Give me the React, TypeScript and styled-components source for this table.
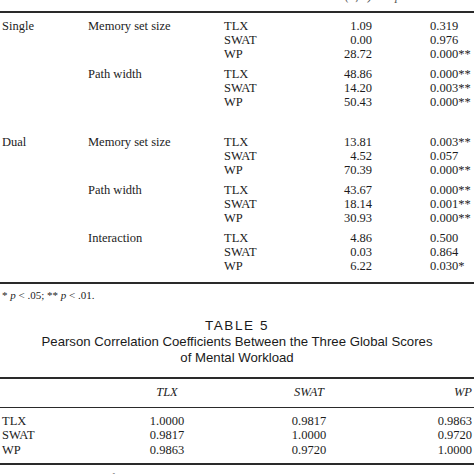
import React from 'react'
import styled, { createGlobalStyle } from 'styled-components'

const GlobalStyle = createGlobalStyle`
  html, body {
    margin: 0;
    padding: 0;
    background: #fff;
  }
  body {
    font-family: 'Liberation Serif', 'Times New Roman', serif;
    color: #1c1c1c;
  }
`

const Page = styled.div`
  width: 474px;
  height: 474px;
  overflow: hidden;
  display: flex;
  flex-direction: column;
`

const Rule = styled.div<{ $thin?: boolean }>`
  height: ${(p) => (p.$thin ? 1 : 2)}px;
  background: #2a2a2a;
  width: 100%;
  flex-shrink: 0;
`

/* ---------- table 4 (anova) ---------- */

const AnovaHead = styled.div`
  display: grid;
  grid-template-columns: 86px 136px 80px 68px 60px;
  padding-left: 2px;
  height: 14px;
  line-height: 14px;
  font-size: 12.5px;
  margin-top: -11px;
  margin-bottom: 8px;
  white-space: nowrap;
  color: #555;
`

const HeadCell = styled.span<{ $right?: boolean; $pad?: number; $italic?: boolean }>`
  text-align: ${(p) => (p.$right ? 'right' : 'left')};
  padding-left: ${(p) => p.$pad ?? 0}px;
  font-style: ${(p) => (p.$italic ? 'italic' : 'normal')};
`

const AnovaBody = styled.div`
  display: flex;
  flex-direction: column;
  gap: 26px;
  padding: 6px 0 9px;
`

const TaskGroup = styled.div`
  display: flex;
  flex-direction: column;
  gap: 6px;
`

const Block = styled.div`
  display: flex;
  flex-direction: column;
`

const AnovaRow = styled.div`
  display: grid;
  grid-template-columns: 86px 136px 80px 68px 110px;
  padding-left: 2px;
  height: 14px;
  line-height: 14px;
  font-size: 12.5px;
  white-space: nowrap;
`

const Cell = styled.span<{ $right?: boolean; $pad?: number }>`
  text-align: ${(p) => (p.$right ? 'right' : 'left')};
  padding-left: ${(p) => p.$pad ?? 0}px;
`

const Footnote = styled.div<{ $top?: number }>`
  font-size: 11px;
  line-height: 14px;
  padding-left: 2px;
  margin-top: ${(p) => p.$top ?? 4}px;
  white-space: nowrap;
  i {
    font-style: italic;
  }
`

/* ---------- table 5 ---------- */

const Caption = styled.div`
  margin-top: 16px;
  margin-bottom: 11px;
  font-family: 'Liberation Sans', Arial, sans-serif;
  font-size: 13.2px;
  line-height: 16px;
  text-align: center;
  color: #1a1a1a;
`

const CaptionNumber = styled.div`
  font-size: 13.5px;
  letter-spacing: 1.6px;
`

const CorrGrid = styled.div<{ $head?: boolean }>`
  display: grid;
  grid-template-columns: 110px 110px 174px 76px;
  padding: ${(p) => (p.$head ? '6px 2px 7px 2px' : '6px 2px 5.5px 2px')};
  font-size: 12.5px;
  line-height: 14.5px;
  white-space: nowrap;
`

const CorrCell = styled.span<{ $align: 'left' | 'center' | 'right'; $italic?: boolean }>`
  text-align: ${(p) => p.$align};
  font-style: ${(p) => (p.$italic ? 'italic' : 'normal')};
`

type Factor = { name: string; rows: [string, string, string][] }
type Task = { task: string; factors: Factor[] }

const anova: Task[] = [
  {
    task: 'Single',
    factors: [
      {
        name: 'Memory set size',
        rows: [
          ['TLX', '1.09', '0.319'],
          ['SWAT', '0.00', '0.976'],
          ['WP', '28.72', '0.000**'],
        ],
      },
      {
        name: 'Path width',
        rows: [
          ['TLX', '48.86', '0.000**'],
          ['SWAT', '14.20', '0.003**'],
          ['WP', '50.43', '0.000**'],
        ],
      },
    ],
  },
  {
    task: 'Dual',
    factors: [
      {
        name: 'Memory set size',
        rows: [
          ['TLX', '13.81', '0.003**'],
          ['SWAT', '4.52', '0.057'],
          ['WP', '70.39', '0.000**'],
        ],
      },
      {
        name: 'Path width',
        rows: [
          ['TLX', '43.67', '0.000**'],
          ['SWAT', '18.14', '0.001**'],
          ['WP', '30.93', '0.000**'],
        ],
      },
      {
        name: 'Interaction',
        rows: [
          ['TLX', '4.86', '0.500'],
          ['SWAT', '0.03', '0.864'],
          ['WP', '6.22', '0.030*'],
        ],
      },
    ],
  },
]

const scores = ['TLX', 'SWAT', 'WP']
const corr = [
  ['1.0000', '0.9817', '0.9863'],
  ['0.9817', '1.0000', '0.9720'],
  ['0.9863', '0.9720', '1.0000'],
]

const alignFor = (i: number): 'center' | 'right' => (i === 2 ? 'right' : 'center')

export default function App() {
  return (
    <Page>
      <GlobalStyle />

      <AnovaHead>
        <HeadCell />
        <HeadCell>Factor</HeadCell>
        <HeadCell>Measure</HeadCell>
        <HeadCell $right $italic>
          F(1, 7)
        </HeadCell>
        <HeadCell $pad={23} $italic>
          p
        </HeadCell>
      </AnovaHead>
      <Rule />

      <AnovaBody>
        {anova.map((group) => (
          <TaskGroup key={group.task}>
            {group.factors.map((factor, fi) => (
              <Block key={factor.name}>
                {factor.rows.map((row, ri) => (
                  <AnovaRow key={row[0]}>
                    <Cell>{fi === 0 && ri === 0 ? group.task : ''}</Cell>
                    <Cell>{ri === 0 ? factor.name : ''}</Cell>
                    <Cell>{row[0]}</Cell>
                    <Cell $right>{row[1]}</Cell>
                    <Cell $pad={58}>{row[2]}</Cell>
                  </AnovaRow>
                ))}
              </Block>
            ))}
          </TaskGroup>
        ))}
      </AnovaBody>
      <Rule />

      <Footnote>
        * <i>p</i> &lt; .05; ** <i>p</i> &lt; .01.
      </Footnote>

      <Caption>
        <CaptionNumber>TABLE 5</CaptionNumber>
        Pearson Correlation Coefficients Between the Three Global Scores
        <br />
        of Mental Workload
      </Caption>

      <Rule />
      <CorrGrid $head>
        <CorrCell $align="left" />
        {scores.map((s, i) => (
          <CorrCell key={s} $align={alignFor(i)} $italic>
            {s}
          </CorrCell>
        ))}
      </CorrGrid>
      <Rule $thin />
      <CorrGrid>
        {scores.map((label, r) => (
          <React.Fragment key={label}>
            <CorrCell $align="left">{label}</CorrCell>
            {corr[r].map((v, i) => (
              <CorrCell key={i} $align={alignFor(i)}>
                {v}
              </CorrCell>
            ))}
          </React.Fragment>
        ))}
      </CorrGrid>
      <Rule />

      <Footnote $top={5}>
        All correlations are significant at <i>p</i> &lt; .001.
      </Footnote>
    </Page>
  )
}
